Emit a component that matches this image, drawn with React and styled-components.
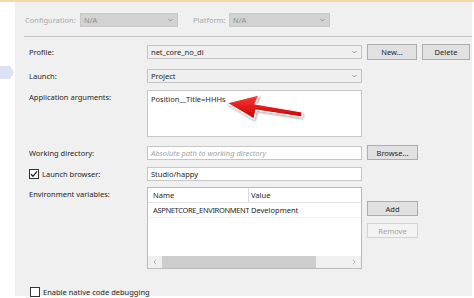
import React from 'react';
import styled, { createGlobalStyle } from 'styled-components';

const GlobalStyle = createGlobalStyle`
  html, body { margin: 0; padding: 0; background: #fff; }
  body {
    font-family: "Noto Sans", "Open Sans", sans-serif;
    font-size: 7.5px;
    color: #1e1e1e;
  }
  * { box-sizing: border-box; }
`;

const Page = styled.div`
  position: relative;
  width: 474px;
  height: 298px;
  overflow: hidden;
  background: #fff;
`;

const TopLine = styled.div`
  height: 2px;
  background: #f7d9a5;
`;

const Body = styled.div`
  display: flex;
`;

const SideStrip = styled.div`
  width: 15px;
  padding-top: 64px;
`;

const SideTab = styled.div`
  width: 14px;
  height: 13px;
  background: #dce1f6;
  clip-path: polygon(0 0, 72% 0, 100% 50%, 72% 100%, 0 100%);
`;

const Panel = styled.div`
  flex: 1;
  height: 294px;
  margin-right: 2px;
  background: #f0f0f0;
`;

const TopBar = styled.div`
  display: flex;
  align-items: center;
  padding: 11px 0 0 10px;
`;

const TopLabel = styled.div`
  width: ${(p) => p.$w}px;
  padding-left: ${(p) => p.$pl || 0}px;
  color: #a8a8a8;
  line-height: 14px;
`;

const Separator = styled.div`
  height: 1px;
  margin: 9px 0 0 9px;
  background: #c9c9c9;
`;

const Form = styled.div`
  padding-left: 14px;
`;

const Row = styled.div`
  display: grid;
  grid-template-columns: 113px 215px auto;
  column-gap: 5px;
  align-items: ${(p) => (p.$top ? 'start' : 'center')};
  margin-top: ${(p) => p.$mt}px;
`;

const Label = styled.div`
  display: flex;
  align-items: center;
  gap: 3px;
  line-height: 14px;
  white-space: nowrap;
`;

const Combo = styled.div`
  position: relative;
  width: ${(p) => (p.$w ? `${p.$w}px` : '100%')};
  height: 14px;
  padding-left: 3px;
  line-height: 12px;
  border: 1px solid ${(p) => (p.$disabled ? '#c9c9c9' : '#c4c4c4')};
  background: ${(p) => (p.$disabled ? '#d2d2d2' : '#efefef')};
  color: ${(p) => (p.$disabled ? '#8e8e8e' : '#1e1e1e')};
  svg {
    position: absolute;
    right: 4px;
    top: 4px;
  }
`;

const TextBox = styled.div`
  height: ${(p) => p.$h || 14}px;
  padding: ${(p) => (p.$h ? '2px 3px' : '0 3px')};
  line-height: 12px;
  border: 1px solid #c6c6c6;
  background: #fff;
  color: ${(p) => (p.$placeholder ? '#a2a2a2' : '#1e1e1e')};
  font-style: ${(p) => (p.$placeholder ? 'italic' : 'normal')};
  white-space: nowrap;
  overflow: hidden;
`;

const ButtonGroup = styled.div`
  display: flex;
  flex-direction: ${(p) => (p.$column ? 'column' : 'row')};
  gap: ${(p) => (p.$column ? 7 : 5)}px;
  padding-top: ${(p) => p.$pt || 0}px;
`;

const Button = styled.div`
  width: ${(p) => p.$w}px;
  height: ${(p) => p.$h || 16}px;
  display: flex;
  align-items: center;
  justify-content: center;
  border: 1px solid ${(p) => (p.$disabled ? '#d3d3d3' : '#adadad')};
  background: ${(p) => (p.$disabled ? '#f3f3f3' : '#e1e1e1')};
  color: ${(p) => (p.$disabled ? '#a3a3a3' : '#1e1e1e')};
`;

const Box = styled.div`
  flex: 0 0 10px;
  width: 10px;
  height: 10px;
  margin-left: ${(p) => p.$ml || 0}px;
  border: 1px solid #333;
  background: #fff;
  display: flex;
  align-items: center;
  justify-content: center;
`;

const Grid = styled.div`
  height: 82px;
  display: flex;
  flex-direction: column;
  border: 1px solid #bababa;
  background: #fff;
`;

const GridRow = styled.div`
  display: grid;
  grid-template-columns: 101px 1fr;
  height: 15px;
  line-height: 14px;
  border-bottom: 1px solid ${(p) => (p.$header ? '#e3e3e3' : '#f1f1f1')};
`;

const Cell = styled.div`
  padding-left: ${(p) => (p.$first ? 5 : 2)}px;
  border-right: ${(p) => (p.$header && p.$first ? '1px solid #dadada' : 'none')};
  letter-spacing: ${(p) => (p.$tight ? '-0.35px' : 'normal')};
  white-space: nowrap;
  overflow: hidden;
`;

const GridFill = styled.div`
  flex: 1;
`;

const HScroll = styled.div`
  height: 12px;
  display: flex;
  align-items: center;
  background: #f0f0f0;
`;

const ScrollArrow = styled.div`
  width: 14px;
  height: 12px;
  display: flex;
  align-items: center;
  justify-content: center;
`;

const Thumb = styled.div`
  width: 154px;
  height: 12px;
  background: #cdcdcd;
`;

const Track = styled.div`
  flex: 1;
`;

const Arrow = styled.svg`
  position: absolute;
  left: 222px;
  top: 89px;
  overflow: visible;
`;

const Chevron = () => (
  <svg width="5" height="4" viewBox="0 0 5 4">
    <path d="M0.5 1 L2.5 3 L4.5 1" fill="none" stroke="#8a8a8a" strokeWidth="0.9" />
  </svg>
);

const Check = () => (
  <svg width="8" height="8" viewBox="0 0 8 8">
    <path d="M1 4.2 L3 6.3 L7 1.4" fill="none" stroke="#222" strokeWidth="1.3" />
  </svg>
);

const ScrollChevron = ({ right }) => (
  <svg width="4" height="6" viewBox="0 0 4 6">
    <path d={right ? 'M1 0.8 L3 3 L1 5.2' : 'M3 0.8 L1 3 L3 5.2'} fill="none" stroke="#a6a6a6" strokeWidth="0.8" />
  </svg>
);

const App = () => {
  return (
    <Page>
      <GlobalStyle />
      <TopLine />
      <Body>
        <SideStrip>
          <SideTab />
        </SideStrip>
        <Panel>
          <TopBar>
            <TopLabel $w={55}>Configuration:</TopLabel>
            <Combo $disabled $w={98}>N/A<Chevron /></Combo>
            <TopLabel $w={51} $pl={15}>Platform:</TopLabel>
            <Combo $disabled $w={101}>N/A<Chevron /></Combo>
          </TopBar>
          <Separator />
          <Form>
            <Row $mt={7}>
              <Label>Profile:</Label>
              <Combo>net_core_no_di<Chevron /></Combo>
              <ButtonGroup>
                <Button $w={50}>New...</Button>
                <Button $w={48}>Delete</Button>
              </ButtonGroup>
            </Row>
            <Row $mt={9}>
              <Label>Launch:</Label>
              <Combo>Project<Chevron /></Combo>
            </Row>
            <Row $mt={7} $top>
              <Label>Application arguments:</Label>
              <TextBox $h={47}>Position__Title=HHHs</TextBox>
            </Row>
            <Row $mt={8}>
              <Label>Working directory:</Label>
              <TextBox $placeholder>Absolute path to working directory</TextBox>
              <Button $w={51} $h={15}>Browse...</Button>
            </Row>
            <Row $mt={7}>
              <Label>
                <Box><Check /></Box>
                Launch browser:
              </Label>
              <TextBox>Studio/happy</TextBox>
            </Row>
            <Row $mt={6} $top>
              <Label>Environment variables:</Label>
              <Grid>
                <GridRow $header>
                  <Cell $header $first>Name</Cell>
                  <Cell $header>Value</Cell>
                </GridRow>
                <GridRow>
                  <Cell $first $tight>ASPNETCORE_ENVIRONMENT</Cell>
                  <Cell>Development</Cell>
                </GridRow>
                <GridFill />
                <HScroll>
                  <ScrollArrow><ScrollChevron /></ScrollArrow>
                  <Thumb />
                  <Track />
                  <ScrollArrow><ScrollChevron right /></ScrollArrow>
                </HScroll>
              </Grid>
              <ButtonGroup $column $pt={14}>
                <Button $w={51} $h={15}>Add</Button>
                <Button $w={51} $h={15} $disabled>Remove</Button>
              </ButtonGroup>
            </Row>
            <Row $mt={16}>
              <Label>
                <Box $ml={1} />
                Enable native code debugging
              </Label>
            </Row>
          </Form>
        </Panel>
      </Body>
      <Arrow width="86" height="34" viewBox="0 0 86 34">
        <defs>
          <linearGradient id="redFill" x1="0" y1="0" x2="0" y2="1">
            <stop offset="0" stopColor="#ff3a3a" />
            <stop offset="1" stopColor="#c40000" />
          </linearGradient>
          <filter id="shadow" x="-20%" y="-30%" width="140%" height="170%">
            <feDropShadow dx="1" dy="1.5" stdDeviation="1.2" floodColor="#000" floodOpacity="0.35" />
          </filter>
        </defs>
        <polygon
          points="5,14 37,6 33,15 80,23 80,28 34,21 32,30"
          fill="url(#redFill)"
          stroke="#fff"
          strokeWidth="1.2"
          strokeLinejoin="round"
          filter="url(#shadow)"
        />
      </Arrow>
    </Page>
  );
};

export default App;
